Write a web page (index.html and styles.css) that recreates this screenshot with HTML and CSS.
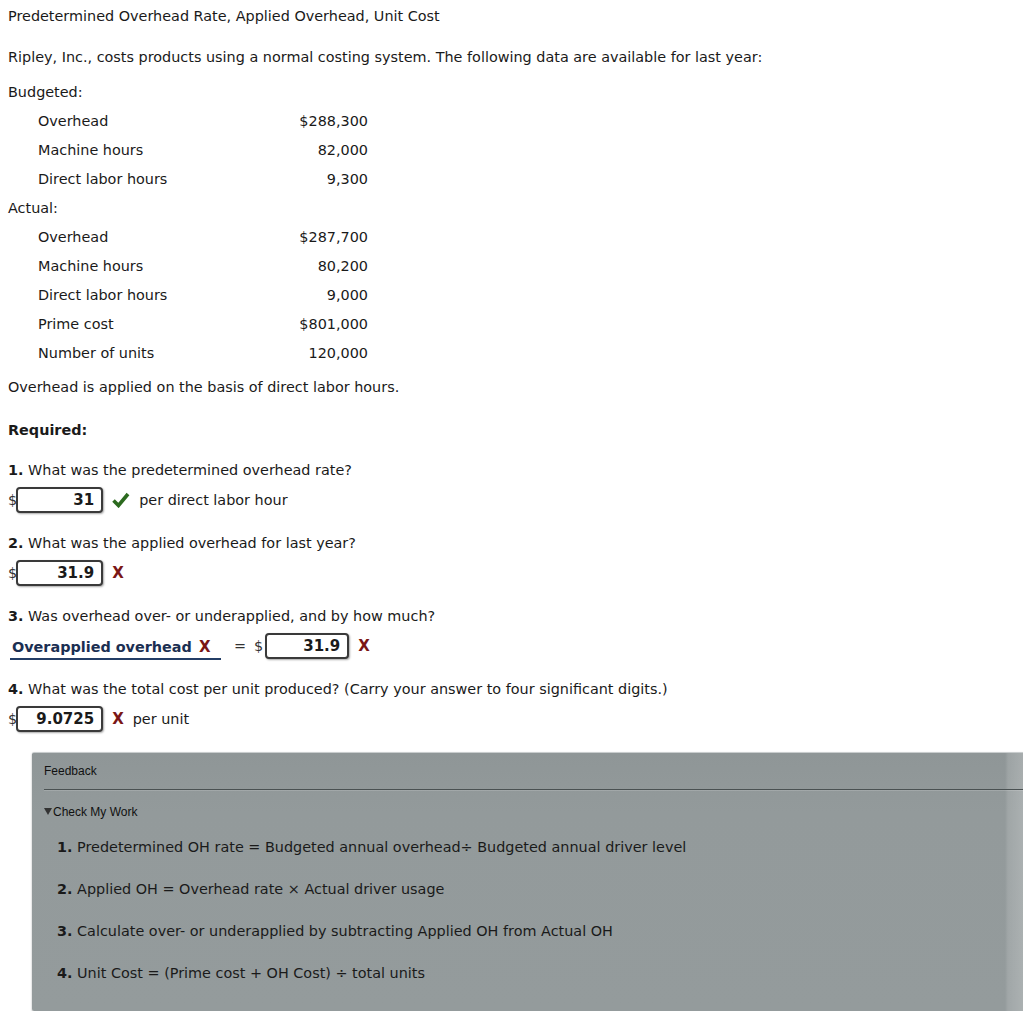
FILE: index.html
```html
<!DOCTYPE html>
<html>
<head>
<meta charset="utf-8">
<link rel="stylesheet" href="styles.css">
</head>
<body>
<div class="page">
  <div class="title">Predetermined Overhead Rate, Applied Overhead, Unit Cost</div>
  <p class="line intro">Ripley, Inc., costs products using a normal costing system. The following data are available for last year:</p>
  <p class="line budget">Budgeted:</p>
  <div class="data">
    <span>Overhead</span><span class="val">$288,300</span>
    <span>Machine hours</span><span class="val">82,000</span>
    <span>Direct labor hours</span><span class="val">9,300</span>
  </div>
  <p class="line">Actual:</p>
  <div class="data">
    <span>Overhead</span><span class="val">$287,700</span>
    <span>Machine hours</span><span class="val">80,200</span>
    <span>Direct labor hours</span><span class="val">9,000</span>
    <span>Prime cost</span><span class="val">$801,000</span>
    <span>Number of units</span><span class="val">120,000</span>
  </div>
  <p class="line basis">Overhead is applied on the basis of direct labor hours.</p>
  <p class="line required"><b>Required:</b></p>

  <p class="line q q1"><b>1.</b> What was the predetermined overhead rate?</p>
  <div class="answer">
    <span class="cur">$</span><span class="box">31</span>
    <svg class="check" width="18" height="16" viewBox="0 0 18 16"><path d="M1.5 8.5 L6.5 13.5 L16 2" fill="none" stroke="#2c6a1f" stroke-width="3.6" stroke-linejoin="miter"/></svg>
    <span class="after">per direct labor hour</span>
  </div>

  <p class="line q"><b>2.</b> What was the applied overhead for last year?</p>
  <div class="answer">
    <span class="cur">$</span><span class="box">31.9</span>
    <span class="x">X</span>
  </div>

  <p class="line q"><b>3.</b> Was overhead over- or underapplied, and by how much?</p>
  <div class="answer">
    <span class="select">Overapplied overhead <span class="x">X</span></span>
    <span class="eq">=</span><span class="cur">$</span><span class="box box3">31.9</span>
    <span class="x">X</span>
  </div>

  <p class="line q"><b>4.</b> What was the total cost per unit produced? (Carry your answer to four significant digits.)</p>
  <div class="answer">
    <span class="cur">$</span><span class="box">9.0725</span>
    <span class="x">X</span>
    <span class="after">per unit</span>
  </div>

  <div class="feedback">
    <div class="fb-head">Feedback</div>
    <div class="fb-toggle"><span class="tri"></span>Check My Work</div>
    <ol class="fb-list">
      <li><b>1.</b> Predetermined OH rate = Budgeted annual overhead&divide; Budgeted annual driver level</li>
      <li><b>2.</b> Applied OH = Overhead rate &times; Actual driver usage</li>
      <li><b>3.</b> Calculate over- or underapplied by subtracting Applied OH from Actual OH</li>
      <li><b>4.</b> Unit Cost = (Prime cost + OH Cost) &divide; total units</li>
    </ol>
  </div>
</div>
</body>
</html>
```
FILE: styles.css
```css
html, body {
  margin: 0;
  padding: 0;
  background: #ffffff;
}
body {
  font-family: "DejaVu Sans", Verdana, sans-serif;
  font-size: 14.4px;
  color: #1a1a1a;
  overflow: hidden;
}
.page {
  padding: 1px 8px 0;
}
.title {
  line-height: 30px;
}
.line {
  margin: 0;
  line-height: 29px;
}
.intro { margin-top: 12px; }
.budget { margin-top: 6px; }
.data {
  display: grid;
  grid-template-columns: 220px 110px;
  padding-left: 30px;
  line-height: 29px;
}
.data .val { text-align: right; }
.basis { margin-top: 5px; }
.required { margin-top: 14px; }
.q { margin-top: 15px; }
.q1.q { margin-top: 11px; }
.answer {
  display: flex;
  align-items: center;
  height: 29px;
}
.cur {
  color: #333;
}
.box {
  display: inline-block;
  box-sizing: border-box;
  width: 87px;
  height: 26px;
  line-height: 22px;
  margin-left: -1px;
  border: 2px solid #3a3a3a;
  border-radius: 4px;
  background: #fff;
  box-shadow: 1px 1px 2px rgba(0,0,0,0.35);
  text-align: right;
  padding-right: 7px;
  font-weight: bold;
  font-size: 15px;
  color: #1a1a1a;
}
.box3 { width: 84px; margin-left: 2px; }
.check { margin-left: 9px; }
.x {
  font-weight: bold;
  font-size: 15px;
  color: #7a1616;
  margin-left: 9px;
}
.after { margin-left: 9px; }
.select {
  display: inline-block;
  margin-left: 2px;
  width: 211px;
  box-sizing: border-box;
  padding-left: 2px;
  font-weight: bold;
  color: #1b2f52;
  border-bottom: 2px solid #233d66;
  line-height: 22px;
  margin-top: 4px;
  white-space: nowrap;
}
.select .x { margin-left: 2px; }
.eq {
  margin-left: 13px;
  color: #333;
  margin-right: 8px;
}
.feedback {
  margin: 19px -8px 0 24px;
  height: 259px;
  box-sizing: border-box;
  background:
    linear-gradient(to right, rgba(255,255,255,0) calc(100% - 18px), rgba(255,255,255,0.12) calc(100% - 15px), rgba(255,255,255,0.22) 100%),
    linear-gradient(to bottom, #8f9697 0, #939a9b 60px, #949b9c 100%);
  border-top: 1px solid #c9cdce;
  box-shadow: 0 1px 2px rgba(0,0,0,0.35);
  border-radius: 2px 0 0 2px;
  padding-left: 12px;
}
.fb-head {
  font-family: "Liberation Sans", Arial, sans-serif;
  font-size: 12px;
  color: #111;
  line-height: 36px;
  border-bottom: 1px solid #4a5152;
  box-shadow: 0 1px 0 rgba(255,255,255,0.15);
}
.fb-toggle {
  display: flex;
  align-items: center;
  font-family: "Liberation Sans", Arial, sans-serif;
  font-size: 12px;
  color: #111;
  line-height: 20px;
  margin-top: 12px;
}
.tri {
  display: inline-block;
  width: 0;
  height: 0;
  border-left: 4px solid transparent;
  border-right: 4px solid transparent;
  border-top: 7px solid #333;
  margin: 0 1px 1px 0;
}
.fb-list {
  list-style: none;
  margin: 14px 0 0 0;
  padding: 0 0 0 13px;
  color: #1a1a1a;
}
.fb-list li {
  line-height: 22px;
  margin-bottom: 20px;
}
```
